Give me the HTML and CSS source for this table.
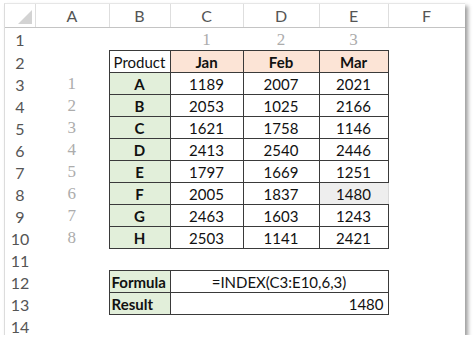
FILE: index.html
```html
<!DOCTYPE html>
<html>
<head>
<meta charset="utf-8">
<link rel="stylesheet" href="styles.css">
</head>
<body>
<div class="sheet">
<table class="grid">
<colgroup>
<col class="c-rn"><col class="c-a"><col class="c-b"><col class="c-c"><col class="c-d"><col class="c-e"><col class="c-f">
</colgroup>
<tr class="hdr">
<th class="corner"><span class="tri"></span></th><th>A</th><th>B</th><th>C</th><th>D</th><th>E</th><th>F</th>
</tr>
<tr><th class="rn">1</th><td></td><td></td><td class="ser">1</td><td class="ser">2</td><td class="ser">3</td><td></td></tr>
<tr><th class="rn">2</th><td></td><td class="t">Product</td><td class="t mon">Jan</td><td class="t mon">Feb</td><td class="t mon">Mar</td><td></td></tr>
<tr><th class="rn">3</th><td class="ser">1</td><td class="t prod">A</td><td class="t">1189</td><td class="t">2007</td><td class="t">2021</td><td></td></tr>
<tr><th class="rn">4</th><td class="ser">2</td><td class="t prod">B</td><td class="t">2053</td><td class="t">1025</td><td class="t">2166</td><td></td></tr>
<tr><th class="rn">5</th><td class="ser">3</td><td class="t prod">C</td><td class="t">1621</td><td class="t">1758</td><td class="t">1146</td><td></td></tr>
<tr><th class="rn">6</th><td class="ser">4</td><td class="t prod">D</td><td class="t">2413</td><td class="t">2540</td><td class="t">2446</td><td></td></tr>
<tr><th class="rn">7</th><td class="ser">5</td><td class="t prod">E</td><td class="t">1797</td><td class="t">1669</td><td class="t">1251</td><td></td></tr>
<tr><th class="rn">8</th><td class="ser">6</td><td class="t prod">F</td><td class="t">2005</td><td class="t">1837</td><td class="t hit">1480</td><td></td></tr>
<tr><th class="rn">9</th><td class="ser">7</td><td class="t prod">G</td><td class="t">2463</td><td class="t">1603</td><td class="t">1243</td><td></td></tr>
<tr><th class="rn">10</th><td class="ser">8</td><td class="t prod">H</td><td class="t">2503</td><td class="t">1141</td><td class="t">2421</td><td></td></tr>
<tr><th class="rn">11</th><td></td><td></td><td></td><td></td><td></td><td></td></tr>
<tr><th class="rn">12</th><td></td><td class="t lab">Formula</td><td class="t" colspan="3">=INDEX(C3:E10,6,3)</td><td></td></tr>
<tr><th class="rn">13</th><td></td><td class="t lab">Result</td><td class="t right" colspan="3">1480</td><td></td></tr>
<tr><th class="rn">14</th><td></td><td></td><td></td><td></td><td></td><td></td></tr>
</table>
</div>
</body>
</html>
```

FILE: styles.css
```css
html, body {
  margin: 0;
  padding: 0;
  background: #ffffff;
}

.sheet {
  width: 461px;
  height: 332px;
  margin: 3px 0 0 4px;
  background: #ffffff;
  border-left: 1px solid #dcdcdc;
  border-top: 1px solid #e6e6e6;
  box-sizing: border-box;
  box-shadow: 3px 3px 4px rgba(0, 0, 0, 0.38);
  overflow: hidden;
}

.grid {
  border-collapse: collapse;
  table-layout: fixed;
  width: 460px;
  font-family: Lato, "Liberation Sans", sans-serif;
  font-size: 15px;
  color: #111111;
}

.c-rn { width: 30px; }
.c-a { width: 74px; }
.c-b { width: 61px; }
.c-c { width: 73px; }
.c-d { width: 76px; }
.c-e { width: 69px; }
.c-f { width: 77px; }

.grid tr { height: 22px; }
.grid tr.hdr { height: 23px; }

.grid td, .grid th {
  padding: 2px 4px 0 4px;
  text-align: center;
  vertical-align: middle;
  white-space: nowrap;
  overflow: hidden;
  border: none;
}

.hdr th {
  font-weight: normal;
  color: #555555;
  font-size: 16px;
  border-right: 1px solid #dedede;
  border-bottom: 1px solid #c4c4c4;
  padding-top: 0;
}

.corner {
  position: relative;
}

.tri {
  position: absolute;
  right: 3px;
  bottom: 3px;
  width: 0;
  height: 0;
  border-left: 14px solid transparent;
  border-bottom: 14px solid #d3d3d3;
}

.rn {
  font-weight: normal;
  color: #555555;
  font-size: 16px;
  border-right: 1px solid #c4c4c4;
  border-bottom: 1px solid #e0e0e0;
}

.ser {
  font-family: "Liberation Serif", serif;
  font-size: 17px;
  color: #acacac;
}

.grid td.t {
  border: 1px solid #3a3a3a;
}

.mon {
  background: #fce4d6;
  font-weight: bold;
}

.prod {
  background: #e2efda;
  font-weight: bold;
}

.lab {
  background: #e2efda;
  font-weight: bold;
  text-align: left !important;
  padding-left: 2px !important;
}

.right {
  text-align: right !important;
}

.grid td.hit {
  background: #eeeeee;
  border-right: 1px solid #d8d8d8;
}
```
